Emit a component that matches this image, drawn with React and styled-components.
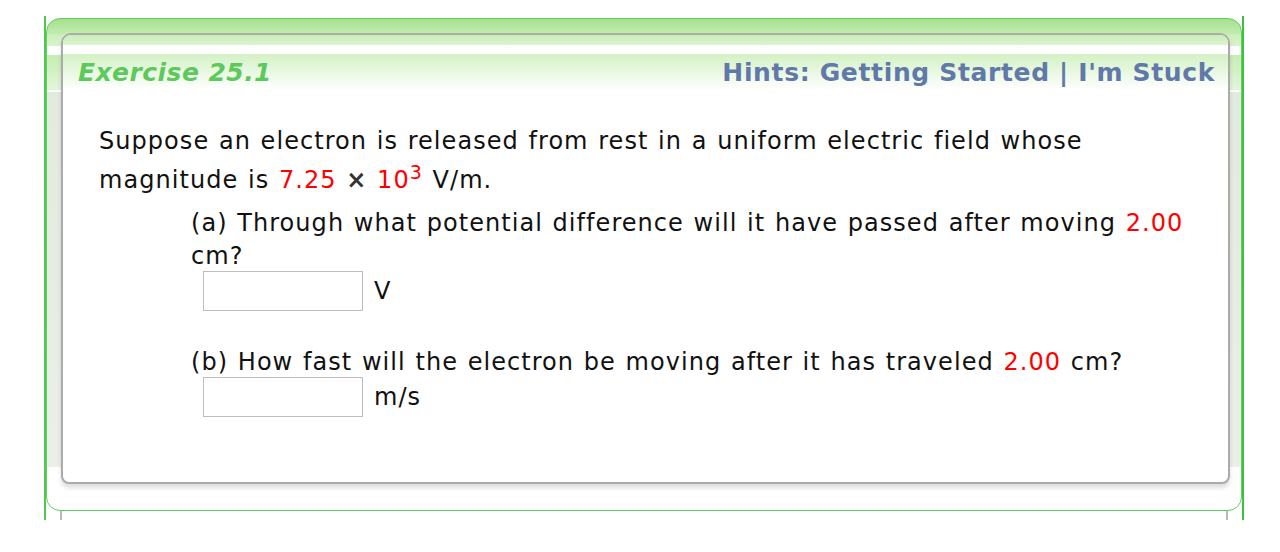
import React from "react";
import styled, { createGlobalStyle } from "styled-components";

const Global = createGlobalStyle`
  html, body {
    margin: 0;
    padding: 0;
    background: #fff;
  }
  body {
    font-family: "DejaVu Sans", Verdana, sans-serif;
  }
`;

const Page = styled.div`
  width: 1280px;
  height: 552px;
  padding-top: 16px;
  box-sizing: border-box;
`;

const Rails = styled.div`
  margin-left: 44px;
  width: 1200px;
  box-sizing: border-box;
  border-left: 2px solid #4ec94e;
  border-right: 2px solid #3cc23c;
  padding-top: 2px;
`;

const GreenBox = styled.div`
  height: 493px;
  box-sizing: border-box;
  border: 1px solid #5fcf5f;
  border-radius: 14px;
  padding: 14px 11px 26px 14px;
  background: linear-gradient(
    to bottom,
    #a6e08e 0px,
    #c3ecb0 15px,
    #cdefbd 16px,
    #d9f3cd 27px,
    #ffffff 27px,
    #ffffff 36px,
    #c6edb3 36px,
    #e4f5dc 71px,
    #ffffff 71px,
    #ffffff 73px,
    #e3eadf 73px,
    #ebefe8 448px,
    #ffffff 448px
  );
`;

const Panel = styled.div`
  height: 451px;
  box-sizing: border-box;
  border: 2px solid #ababab;
  border-radius: 10px 10px 8px 8px;
  background: #fff;
  box-shadow: 0 4px 4px rgba(0, 0, 0, 0.13);
  overflow: hidden;
`;

const Cap = styled.div`
  height: 10px;
  background: linear-gradient(to bottom, #c9edb8, #dcf4d1);
`;

const Gap = styled.div`
  height: 9px;
  background: #fff;
`;

const Header = styled.div`
  height: 36px;
  display: flex;
  align-items: center;
  justify-content: space-between;
  padding: 0 13px 0 15px;
  background: linear-gradient(to bottom, #d3f1c4, #ffffff);
  font-weight: bold;
  font-size: 25px;
`;

const Title = styled.span`
  font-style: italic;
  color: #5dc95d;
  letter-spacing: 0.45px;
`;

const Hints = styled.span`
  color: #6079a9;
  letter-spacing: 0.65px;
`;

const Body = styled.div`
  padding: 32px 36px 0 36px;
  font-size: 24px;
  letter-spacing: 1.05px;
  word-spacing: 1px;
  color: #111;
`;

const Intro = styled.p`
  margin: 0;
  line-height: 39px;
`;

const Part = styled.div`
  margin: 7px 0 0 92px;
  line-height: 33px;
`;

const Red = styled.span`
  color: #ff0000;
`;

const Times = styled.span`
  color: #333;
  font-weight: bold;
`;

const Sup = styled.sup`
  color: #ff0000;
  font-size: 19px;
  line-height: 0;
  vertical-align: 9px;
`;

const AnswerRow = styled.div`
  display: flex;
  align-items: center;
  margin: -2px 0 0 12px;
  height: 40px;
`;

const Input = styled.input`
  width: 160px;
  height: 40px;
  box-sizing: border-box;
  border: 1px solid #bdbdbd;
  margin: 0 11px 0 0;
  padding: 0;
  background: #fff;
`;

const Unit = styled.span`
  line-height: 40px;
`;

const Spacer = styled.div`
  height: 35px;
`;

const Tail = styled.div`
  height: 9px;
  margin: 0 14px 0 14px;
  border-left: 2px solid #b8b8b8;
  border-right: 2px solid #b8b8b8;
`;

export default function App() {
  return (
    <Page>
      <Global />
      <Rails>
        <GreenBox>
          <Panel>
            <Cap />
            <Gap />
            <Header>
              <Title>Exercise 25.1</Title>
              <Hints>Hints: Getting Started | I'm Stuck</Hints>
            </Header>
            <Body>
              <Intro>
                Suppose an electron is released from rest in a uniform electric
                field whose magnitude is <Red>7.25</Red> <Times>×</Times>{" "}
                <Red>10</Red>
                <Sup>3</Sup> V/m.
              </Intro>
              <Part>
                (a) Through what potential difference will it have passed after
                moving <Red>2.00</Red> cm?
                <AnswerRow>
                  <Input type="text" />
                  <Unit>V</Unit>
                </AnswerRow>
                <Spacer />
                (b) How fast will the electron be moving after it has traveled{" "}
                <Red>2.00</Red> cm?
                <AnswerRow>
                  <Input type="text" />
                  <Unit>m/s</Unit>
                </AnswerRow>
              </Part>
            </Body>
          </Panel>
        </GreenBox>
        <Tail />
      </Rails>
    </Page>
  );
}
